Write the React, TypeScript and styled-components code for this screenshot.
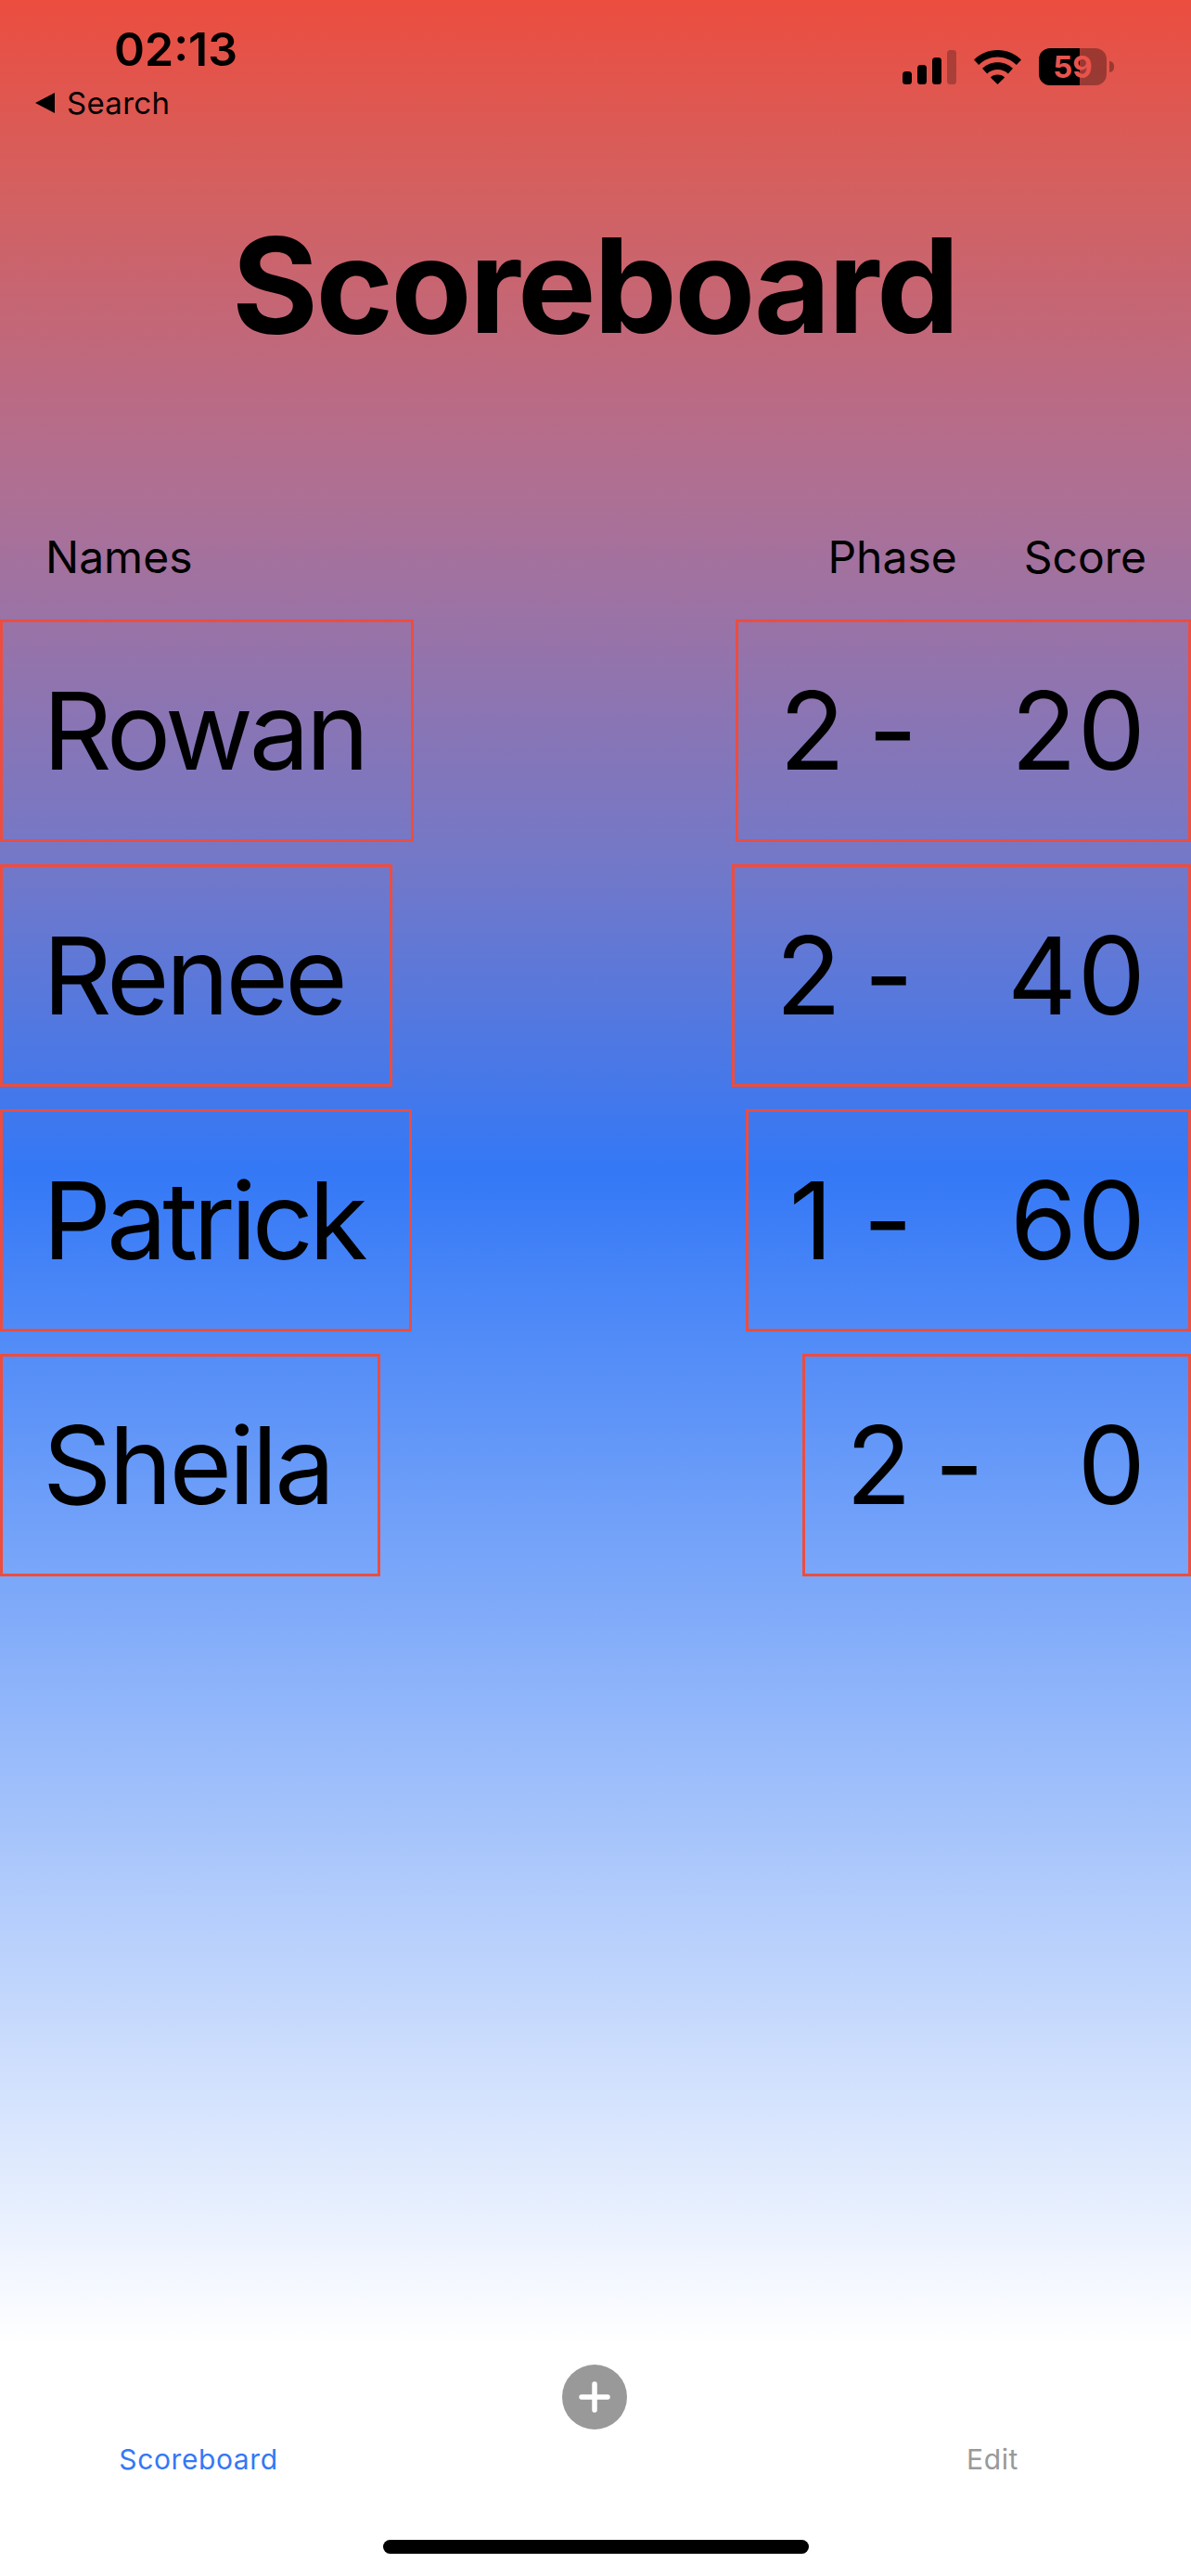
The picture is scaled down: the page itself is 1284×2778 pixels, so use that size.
import React from "react";
import styled, { createGlobalStyle } from "styled-components";

const players = [
  { name: "Rowan", tracking: -4.2, phase: 2, phaseTracking: -1, score: 20 },
  { name: "Renee", tracking: -3.9, phase: 2, phaseTracking: -1, score: 40 },
  { name: "Patrick", tracking: -5, phase: 1, phaseTracking: 3, score: 60 },
  { name: "Sheila", tracking: -3.3, phase: 2, phaseTracking: -1, score: 0 },
];

const GlobalStyle = createGlobalStyle`
  html, body {
    margin: 0;
    padding: 0;
    background: #fff;
  }
  body {
    font-family: Inter, "Liberation Sans", sans-serif;
    color: #000;
  }
`;

const Page = styled.div`
  width: 1284px;
  height: 2778px;
  display: flex;
  flex-direction: column;
  overflow: hidden;
  background: linear-gradient(
    180deg,
    #ec4d3f 0px,
    #d4605f 200px,
    #bb6a83 420px,
    #ad7095 540px,
    #7378c8 930px,
    #3478f6 1262px,
    #ffffff 2530px
  );
`;

const StatusBar = styled.div`
  height: 130px;
  display: flex;
  justify-content: space-between;
  align-items: flex-start;
  box-sizing: border-box;
  padding: 0 91px 0 38px;
`;

const StatusLeft = styled.div`
  display: flex;
  flex-direction: column;
`;

const Time = styled.div`
  font-size: 50px;
  font-weight: 600;
  line-height: 60px;
  margin: 23px 0 0 85px;
`;

const BackLink = styled.div`
  display: flex;
  align-items: center;
  gap: 13px;
  font-size: 33px;
  line-height: 40px;
  letter-spacing: 0.3px;
  margin-top: 8px;
`;

const BackArrow = styled.span`
  width: 0;
  height: 0;
  border-top: 11px solid transparent;
  border-bottom: 11px solid transparent;
  border-right: 21px solid #000;
`;

const StatusIcons = styled.div`
  display: flex;
  align-items: center;
  margin-top: 52px;
`;

const Battery = styled.div`
  width: 73px;
  height: 40px;
  border-radius: 12px;
  margin-left: 19px;
  position: relative;
  display: flex;
  align-items: center;
  justify-content: center;
  font-size: 33px;
  font-weight: 700;
  color: #e8534c;
  background: linear-gradient(90deg, #000 60%, rgba(0, 0, 0, 0.32) 60%);

  &::after {
    content: "";
    position: absolute;
    left: 76px;
    top: 14px;
    width: 5px;
    height: 12px;
    border-radius: 0 6px 6px 0;
    background: rgba(0, 0, 0, 0.32);
  }
`;

const Title = styled.h1`
  margin: 0;
  text-align: center;
  font-size: 142px;
  font-weight: 700;
  line-height: 170px;
  padding: 92px 2px 1px 0;
  letter-spacing: -2.5px;
`;

const ColumnHeader = styled.div`
  display: flex;
  align-items: center;
  font-size: 48px;
  line-height: 60px;
  margin-top: 178px;
  padding: 0 48px 0 49px;
`;

const NamesLabel = styled.div`
  flex: 1;
`;

const PhaseLabel = styled.div`
  margin-right: 72px;
`;

const Rows = styled.div`
  display: flex;
  flex-direction: column;
  gap: 24px;
  margin-top: 37px;
`;

const Row = styled.div`
  display: flex;
  justify-content: space-between;
`;

const Cell = styled.div`
  height: 240px;
  box-sizing: border-box;
  border: 3px solid #ec4d3f;
  display: flex;
  align-items: center;
  font-size: 116px;
  line-height: 140px;
`;

const NameCell = styled(Cell)<{ $tracking: number }>`
  padding: 0 49px 0 43px;
  letter-spacing: ${(p) => p.$tracking}px;
`;

const ScoreCell = styled(Cell)`
  padding: 0 45px 0 44px;
  gap: 102px;
  letter-spacing: 1px;
`;

const PhaseText = styled.span<{ $tracking: number }>`
  letter-spacing: ${(p) => p.$tracking}px;
  word-spacing: -6px;
`;

const Spacer = styled.div`
  flex: 1;
`;

const TabBar = styled.div`
  display: grid;
  grid-template-columns: repeat(3, 1fr);
  align-items: end;
  height: 120px;
`;

const TabLabel = styled.div<{ $active?: boolean }>`
  text-align: center;
  font-size: 30px;
  line-height: 36px;
  letter-spacing: 0.6px;
  color: ${(p) => (p.$active ? "#3478f6" : "#999999")};
`;

const AddTab = styled.div`
  display: flex;
  justify-content: center;
  align-self: start;
  padding-right: 2px;
`;

const AddButton = styled.div`
  width: 70px;
  height: 70px;
  border-radius: 50%;
  background: #999999;
  display: flex;
  align-items: center;
  justify-content: center;
`;

const HomeArea = styled.div`
  height: 108px;
  display: flex;
  justify-content: center;
  align-items: flex-end;
  box-sizing: border-box;
  padding-bottom: 24px;
`;

const HomeIndicator = styled.div`
  width: 459px;
  height: 15px;
  border-radius: 8px;
  background: #000;
`;

const SignalIcon = () => (
  <svg width="58" height="37" viewBox="0 0 58 37">
    <rect x="0" y="23" width="10" height="14" rx="3.5" fill="#000" />
    <rect x="16" y="16" width="10" height="21" rx="3.5" fill="#000" />
    <rect x="32" y="8" width="10" height="29" rx="3.5" fill="#000" />
    <rect x="48" y="0" width="10" height="37" rx="3.5" fill="#000" fillOpacity="0.25" />
  </svg>
);

const WifiIcon = () => (
  <svg width="51" height="37" viewBox="0 0 51 37" style={{ marginLeft: 19 }}>
    <path d="M25.5 0C15.5 0 6.9 3.9 0 10.4l5.2 5.6C11 10.6 17.9 7.6 25.5 7.6s14.5 3 20.3 8.4l5.2-5.6C44.100 3.900 35.500 0 25.500 0Z" fill="#000" />
    <path d="M25.500 13.200c-6.600 0-12.200 2.500-16.500 6.600l5.200 5.600c3-2.800 6.800-4.500 11.300-4.500s8.300 1.700 11.300 4.500l5.200-5.600c-4.300-4.100-9.900-6.600-16.500-6.600Z" fill="#000" />
    <path d="M25.500 26.500c-3.300 0-5.900 1.100-7.700 2.900L25.500 37l7.700-7.600c-1.800-1.800-4.400-2.900-7.700-2.900Z" fill="#000" />
  </svg>
);

const PlusIcon = () => (
  <svg width="34" height="34" viewBox="0 0 34 34">
    <path d="M17 3v28M3 17h28" stroke="#fff" strokeWidth="5.5" strokeLinecap="round" />
  </svg>
);

export default function App() {
  return (
    <Page>
      <GlobalStyle />
      <StatusBar>
        <StatusLeft>
          <Time>02:13</Time>
          <BackLink>
            <BackArrow />
            Search
          </BackLink>
        </StatusLeft>
        <StatusIcons>
          <SignalIcon />
          <WifiIcon />
          <Battery>59</Battery>
        </StatusIcons>
      </StatusBar>

      <Title>Scoreboard</Title>

      <ColumnHeader>
        <NamesLabel>Names</NamesLabel>
        <PhaseLabel>Phase</PhaseLabel>
        <div>Score</div>
      </ColumnHeader>

      <Rows>
        {players.map((player) => (
          <Row key={player.name}>
            <NameCell $tracking={player.tracking}>{player.name}</NameCell>
            <ScoreCell>
              <PhaseText $tracking={player.phaseTracking}>{player.phase} -</PhaseText>
              <span>{player.score}</span>
            </ScoreCell>
          </Row>
        ))}
      </Rows>

      <Spacer />

      <TabBar>
        <TabLabel $active>Scoreboard</TabLabel>
        <AddTab>
          <AddButton>
            <PlusIcon />
          </AddButton>
        </AddTab>
        <TabLabel>Edit</TabLabel>
      </TabBar>
      <HomeArea>
        <HomeIndicator />
      </HomeArea>
    </Page>
  );
}
